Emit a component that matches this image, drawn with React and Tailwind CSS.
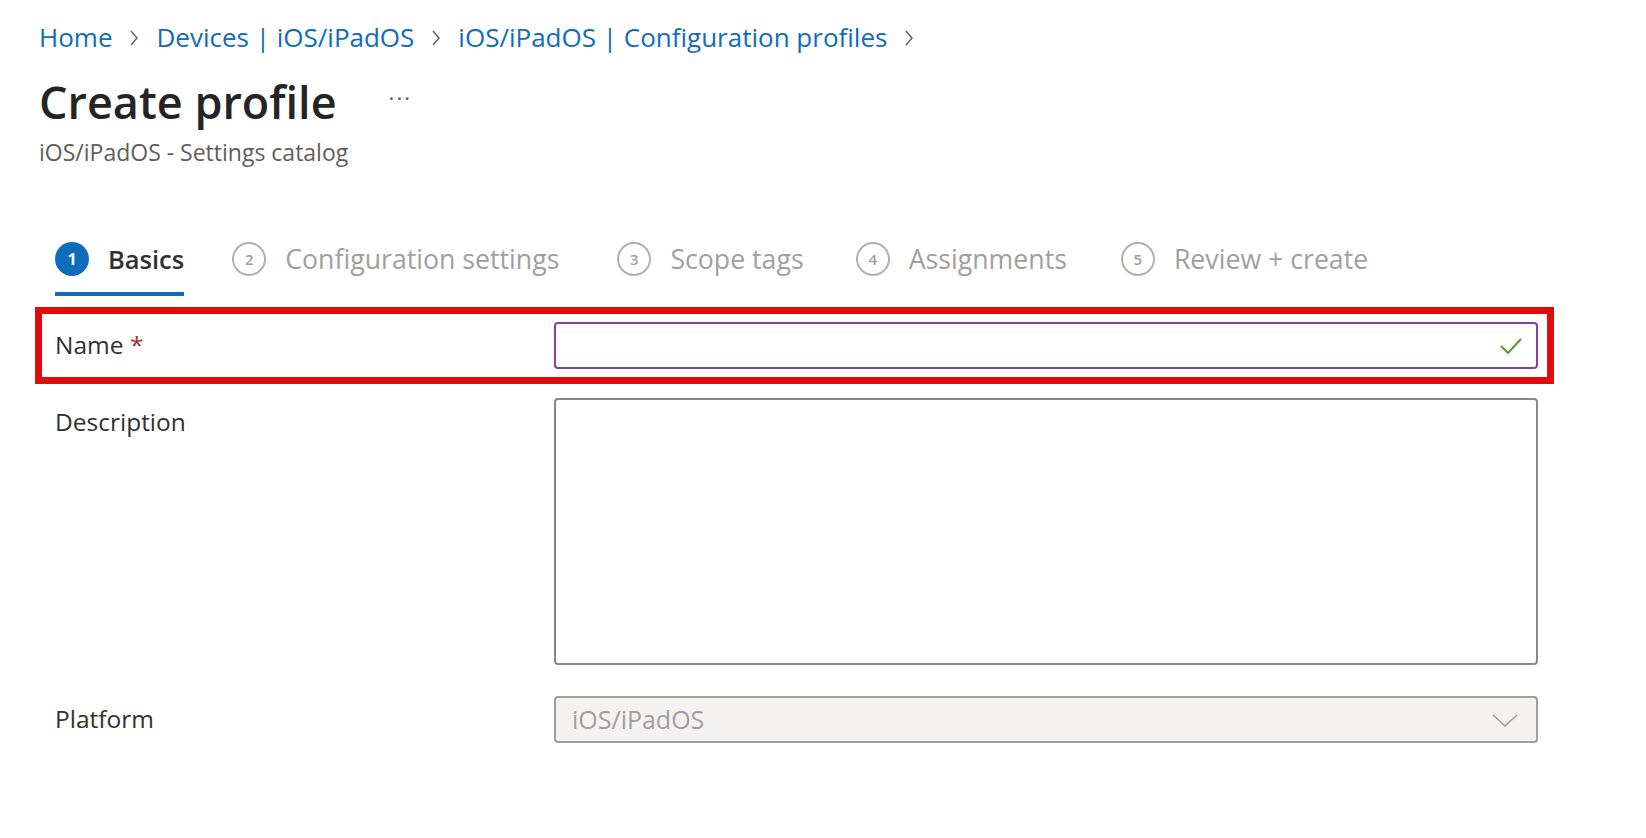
import React from 'react';

const font = { fontFamily: '"Open Sans", "Noto Sans", sans-serif' };

function Chevron() {
  return (
    <svg width="12" height="18" viewBox="0 0 12 18" className="mx-[16px] mt-[2px]">
      <path d="M3 2 L9 9 L3 16" fill="none" stroke="#605e5c" strokeWidth="1.4" />
    </svg>
  );
}

const steps = [
  { label: 'Basics', gap: 'mr-[48px]' },
  { label: 'Configuration settings', gap: 'mr-[58px]' },
  { label: 'Scope tags', gap: 'mr-[52px]' },
  { label: 'Assignments', gap: 'mr-[54px]' },
  { label: 'Review + create', gap: '' },
];

function Step({ n, label, active, gap }) {
  return (
    <div className={`relative flex items-center h-[74px] ${gap}`}>
      {active ? (
        <div className="w-[34px] h-[34px] rounded-full bg-[#0f6cbd] text-white flex items-center justify-center text-[16px] font-bold">{n}</div>
      ) : (
        <div className="w-[34px] h-[34px] rounded-full border-2 border-[#b3b0ad] text-[#a19f9d] flex items-center justify-center text-[15px] font-semibold">{n}</div>
      )}
      <span className={`ml-[19px] ${active ? 'text-[25.5px] text-[#323130] font-semibold' : 'text-[26.7px] text-[#a19f9d]'}`}>{label}</span>
      {active && <div className="absolute left-0 right-0 bottom-0 h-[4px] bg-[#0f6cbd]" />}
    </div>
  );
}

export default function App() {
  return (
    <div className="w-[1646px] h-[838px] bg-white overflow-hidden" style={font}>
      <div className="pl-[39px] pt-[18px]">
        <div className="flex items-center text-[26px] text-[#0f6cbd] h-[38px]">
          <span>Home</span>
          <Chevron />
          <span>Devices | iOS/iPadOS</span>
          <Chevron />
          <span>iOS/iPadOS | Configuration profiles</span>
          <Chevron />
        </div>
        <div className="flex items-center mt-[17px] h-[56px]">
          <h1 className="text-[45px] font-semibold text-[#242424] leading-none">Create profile</h1>
          <span className="ml-[52px] text-[#605e5c] text-[22px] -mt-[8px] tracking-[2px]">···</span>
        </div>
        <div className="text-[23px] leading-[32px] text-[#605e5c] mt-[7px]">iOS/iPadOS - Settings catalog</div>
      </div>

      <div className="flex pl-[55px] mt-[54px]">
        {steps.map((s, i) => (
          <Step key={s.label} n={i + 1} label={s.label} gap={s.gap} active={i === 0} />
        ))}
      </div>

      <div className="mt-[11px] pl-[35px]">
        <div className="w-[1519px] border-[7px] border-[#e00b0b] flex items-center pl-[13px] pr-[9px] py-[8px]">
          <div className="w-[499px] text-[24.5px] text-[#323130]">
            Name <span className="text-[#a4262c]">*</span>
          </div>
          <div className="flex-1 h-[47px] border-2 border-[#8a3fa0] rounded-[4px] flex items-center justify-end pr-[13px]">
            <svg width="24" height="20" viewBox="0 0 24 20">
              <path d="M2 10 L9 17 L22 3" fill="none" stroke="#5c9e31" strokeWidth="2.2" />
            </svg>
          </div>
        </div>
      </div>

      <div className="flex pl-[55px] mt-[14px]">
        <div className="w-[499px] text-[24.5px] text-[#323130] pt-[6px]">Description</div>
        <div className="w-[984px] h-[267px] border-2 border-[#8a8886] rounded-[4px]" />
      </div>

      <div className="flex items-center pl-[55px] mt-[31px]">
        <div className="w-[499px] text-[24.5px] text-[#323130]">Platform</div>
        <div className="w-[984px] h-[47px] border-2 border-[#a19f9d] rounded-[4px] bg-[#f3f2f1] flex items-center justify-between pl-[16px] pr-[17px]">
          <span className="text-[25px] text-[#a19f9d]">iOS/iPadOS</span>
          <svg width="28" height="16" viewBox="0 0 28 16">
            <path d="M2 3 L14 14 L26 3" fill="none" stroke="#a19f9d" strokeWidth="1.6" />
          </svg>
        </div>
      </div>
    </div>
  );
}
